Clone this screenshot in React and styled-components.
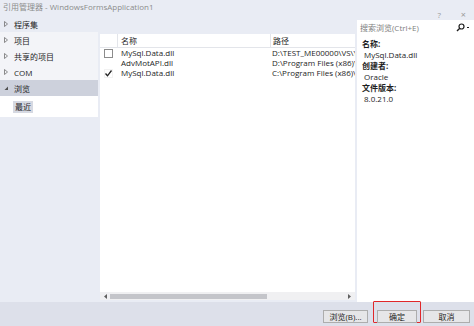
import React from "react";
import styled, { createGlobalStyle } from "styled-components";

const Global = createGlobalStyle`
  html, body { margin: 0; padding: 0; background: #e9ecf4; }
  * { box-sizing: border-box; }
`;

const font = `"Open Sans", "Noto Sans CJK SC", sans-serif`;

const Window = styled.div`
  width: 474px;
  height: 326px;
  background: #e9ecf4;
  font-family: ${font};
  font-size: 8px;
  color: #1e1e1e;
  display: flex;
  flex-direction: column;
  overflow: hidden;
`;

const TitleBar = styled.div`
  height: 16px;
  display: flex;
  align-items: flex-start;
  padding: 2px 8px 0 3px;
  color: #8c8c8c;
  line-height: 10px;
`;

const Title = styled.div`
  flex: 1;
`;

const TitleButton = styled.span`
  margin-top: 8px;
  margin-left: ${(p) => p.gap || 0}px;
  color: #9a9a9a;
  font-size: ${(p) => p.size || 8}px;
`;

const Body = styled.div`
  flex: 1;
  display: grid;
  grid-template-columns: 98px 255px 117px;
  column-gap: 2px;
  min-height: 0;
`;

const Nav = styled.div`
  display: flex;
  flex-direction: column;
`;

const NavRow = styled.div`
  height: 16px;
  display: flex;
  align-items: center;
  padding-left: 4px;
  gap: 6px;
  background: ${(p) => (p.selected ? "#cdd1dc" : p.light ? "#f3f4f8" : "transparent")};
`;

const NavSub = styled.div`
  height: 21px;
  background: #ffffff;
  display: flex;
  align-items: center;
  padding-left: 13px;
`;

const SubTag = styled.span`
  background: #d6d9e2;
  padding: 1px 2px;
  line-height: 10px;
`;

const Middle = styled.div`
  padding-top: 18px;
  display: flex;
  flex-direction: column;
  padding-bottom: 2px;
`;

const ListPanel = styled.div`
  flex: 1;
  background: #ffffff;
  display: flex;
  flex-direction: column;
  min-height: 0;
`;

const Columns = styled.div`
  display: grid;
  grid-template-columns: 17px 153px 85px;
  overflow: hidden;
`;

const HeaderCell = styled.div`
  height: 14px;
  display: flex;
  align-items: center;
  padding-left: ${(p) => p.pad || 0}px;
  border-bottom: 1px solid #e3e5ea;
  border-left: ${(p) => (p.divider ? "1px solid #e3e5ea" : "none")};
  white-space: nowrap;
`;

const Cell = styled.div`
  height: 10px;
  line-height: 10px;
  padding-left: ${(p) => p.pad || 0}px;
  white-space: nowrap;
  overflow: hidden;
  display: flex;
  align-items: center;
  justify-content: ${(p) => (p.center ? "center" : "flex-start")};
`;

const Spacer = styled.div`
  flex: 1;
`;

const HScroll = styled.div`
  height: 8px;
  background: #f0f0f2;
  display: flex;
  align-items: center;
  padding: 0 4px;
  gap: 3px;
`;

const Thumb = styled.div`
  width: 157px;
  height: 5px;
  background: #c4c5ca;
`;

const Right = styled.div`
  display: flex;
  flex-direction: column;
`;

const Search = styled.div`
  margin-top: 4px;
  height: 14px;
  background: #ffffff;
  display: flex;
  align-items: center;
  padding: 0 4px 0 3px;
  color: #7e7e7e;
`;

const Details = styled.div`
  flex: 1;
  background: #ffffff;
  padding: 4px 5px;
  line-height: 11px;
`;

const Label = styled.div`
  font-weight: bold;
`;

const Value = styled.div`
  padding-left: 2px;
`;

const Footer = styled.div`
  height: 24px;
  background: #dde0ea;
  display: flex;
  justify-content: flex-end;
  align-items: flex-end;
  padding: 0 4px 3px 0;
`;

const Button = styled.div`
  width: ${(p) => p.w}px;
  height: 13px;
  background: #e6e6e8;
  border: 1px solid #adadad;
  display: flex;
  align-items: center;
  justify-content: center;
  line-height: 10px;
`;

const Mark = styled.div`
  height: 22px;
  margin: 0 2px 0 5px;
  padding: 8px 3px 0;
  border: 1.5px solid #e0282a;
  border-radius: 1px;
  display: flex;
  align-items: flex-start;
`;

const Collapsed = () => (
  <svg width="4" height="6" viewBox="0 0 4 6">
    <path d="M0.5 0.5 L3.5 3 L0.5 5.5 Z" fill="none" stroke="#707070" strokeWidth="0.8" />
  </svg>
);

const Expanded = () => (
  <svg width="4" height="6" viewBox="0 0 4 6">
    <path d="M4 1.5 L4 5 L0.5 5 Z" fill="#505050" />
  </svg>
);

const Check = ({ checked }) => (
  <svg width="9" height="9" viewBox="0 0 9 9">
    <rect x="0.5" y="0.5" width="8" height="8" fill="#fff" stroke={checked ? "#f2f2f2" : "#8c8c8c"} />
    {checked && <path d="M1.5 4.5 L3.5 6.8 L7.5 1.5" fill="none" stroke="#222" strokeWidth="1.3" />}
  </svg>
);

const SearchIcon = () => (
  <svg width="14" height="9" viewBox="0 0 14 9">
    <circle cx="5.5" cy="3.5" r="2.5" fill="none" stroke="#1e1e1e" strokeWidth="1.2" />
    <path d="M3.8 5.2 L1 8" stroke="#1e1e1e" strokeWidth="1.4" />
    <path d="M11 4.5 L13 4.5" stroke="#1e1e1e" strokeWidth="1" />
  </svg>
);

const Arrow = ({ dir }) => (
  <svg width="3" height="5" viewBox="0 0 3 5">
    <path d={dir === "left" ? "M3 0 L0 2.5 L3 5 Z" : "M0 0 L3 2.5 L0 5 Z"} fill="#606060" />
  </svg>
);

const navItems = [
  { label: "程序集" },
  { label: "项目", light: true },
  { label: "共享的项目", light: true },
  { label: "COM", light: true },
];

const rows = [
  { check: "empty", name: "MySql.Data.dll", path: "D:\\TEST_ME00000\\VS\\Y" },
  { check: null, name: "AdvMotAPI.dll", path: "D:\\Program Files (x86)\\A" },
  { check: "checked", name: "MySql.Data.dll", path: "C:\\Program Files (x86)\\M" },
];

export default function App() {
  return (
    <Window>
      <Global />
      <TitleBar>
        <Title>引用管理器 - WindowsFormsApplication1</Title>
        <TitleButton>?</TitleButton>
        <TitleButton gap={20} size={9}>×</TitleButton>
      </TitleBar>
      <Body>
        <Nav>
          {navItems.map((item) => (
            <NavRow key={item.label} light={item.light}>
              <Collapsed />
              {item.label}
            </NavRow>
          ))}
          <NavRow selected>
            <Expanded />
            浏览
          </NavRow>
          <NavSub>
            <SubTag>最近</SubTag>
          </NavSub>
        </Nav>
        <Middle>
          <ListPanel>
            <Columns>
              <HeaderCell />
              <HeaderCell divider pad={3}>名称</HeaderCell>
              <HeaderCell divider pad={2}>路径</HeaderCell>
              {rows.map((r, i) => (
                <React.Fragment key={i}>
                  <Cell center>{r.check && <Check checked={r.check === "checked"} />}</Cell>
                  <Cell pad={4}>{r.name}</Cell>
                  <Cell pad={2}>{r.path}</Cell>
                </React.Fragment>
              ))}
            </Columns>
            <Spacer />
            <HScroll>
              <Arrow dir="left" />
              <Thumb />
              <Spacer />
              <Arrow dir="right" />
            </HScroll>
          </ListPanel>
        </Middle>
        <Right>
          <Search>
            <Spacer>搜索浏览(Ctrl+E)</Spacer>
            <SearchIcon />
          </Search>
          <Details>
            <Label>名称:</Label>
            <Value>MySql.Data.dll</Value>
            <Label>创建者:</Label>
            <Value>Oracle</Value>
            <Label>文件版本:</Label>
            <Value>8.0.21.0</Value>
          </Details>
        </Right>
      </Body>
      <Footer>
        <Button w={45}>浏览(B)...</Button>
        <Mark>
          <Button w={40}>确定</Button>
        </Mark>
        <Button w={47}>取消</Button>
      </Footer>
    </Window>
  );
}
